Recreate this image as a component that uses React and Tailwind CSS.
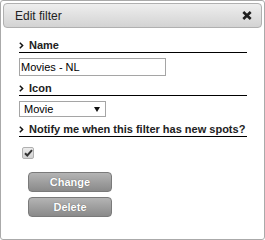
import React from "react"

function Chevron() {
  return (
    <svg width="5" height="7" viewBox="0 0 5 7" className="shrink-0">
      <polyline points="0.8,0.8 3.6,3.5 0.8,6.2" fill="none" stroke="#111" strokeWidth="1.5" />
    </svg>
  )
}

function Heading({ children, className = "" }) {
  return (
    <div className={`flex items-center h-[15px] border-b border-black ${className}`}>
      <Chevron />
      <span className="ml-[5px] text-[11px] leading-[14px] font-bold text-[#222]">{children}</span>
    </div>
  )
}

function GrayButton({ children, className = "" }) {
  return (
    <button className={`w-[84px] h-[20px] rounded-[4px] border border-[#7a7a7a] bg-gradient-to-b from-[#b4b4b4] to-[#8a8a8a] text-white text-[11px] font-bold leading-none [text-shadow:0_0_1px_#555] ${className}`}>
      {children}
    </button>
  )
}

export default function App() {
  return (
    <div className="w-[265px] h-[240px] bg-white border border-[#aaaaaa] rounded-[3px] p-[2px] font-['Liberation_Sans',Arial,sans-serif]">
      <div className="flex items-center justify-between h-[25px] rounded-[4px] border border-[#b0b0b0] bg-gradient-to-b from-[#eeeeee] to-[#d3d3d3] pl-[11px] pr-[9px]">
        <span className="text-[12px] text-[#222]">Edit filter</span>
        <svg width="10" height="9" viewBox="0 0 10 9">
          <path d="M1.3 1 L8.7 8 M8.7 1 L1.3 8" stroke="#1e1e1e" strokeWidth="2.6" strokeLinecap="butt" />
        </svg>
      </div>

      <div className="pl-[16px] pr-[15px]">
        <Heading className="mt-[10px]">Name</Heading>
        <input
          defaultValue="Movies - NL"
          className="mt-[5px] block w-[147px] h-[18px] border border-[#a5a5a5] px-[1px] text-[11px] text-black outline-none"
        />

        <Heading className="mt-[5px]">Icon</Heading>
        <div className="mt-[5px] flex items-center justify-between w-[87px] h-[16px] border border-[#a5a5a5] pl-[4px] pr-[5px] text-[11px] text-black">
          <span>Movie</span>
          <svg width="6" height="5" viewBox="0 0 6 5">
            <polygon points="0,0 6,0 3,5" fill="#111" />
          </svg>
        </div>

        <Heading className="mt-[5px]">Notify me when this filter has new spots?</Heading>
        <div className="mt-[10px] ml-[3px] w-[12px] h-[12px] rounded-[2px] border border-[#b0b0b0] bg-gradient-to-b from-[#ececec] to-[#d2d2d2] flex items-center justify-center">
          <svg width="9" height="8" viewBox="0 0 9 8">
            <path d="M1 4.2 L3.3 6.5 L8 1.2" fill="none" stroke="#333" strokeWidth="2" />
          </svg>
        </div>

        <div className="mt-[13px] ml-[9px] flex flex-col gap-[5px]">
          <GrayButton>Change</GrayButton>
          <GrayButton>Delete</GrayButton>
        </div>
      </div>
    </div>
  )
}
